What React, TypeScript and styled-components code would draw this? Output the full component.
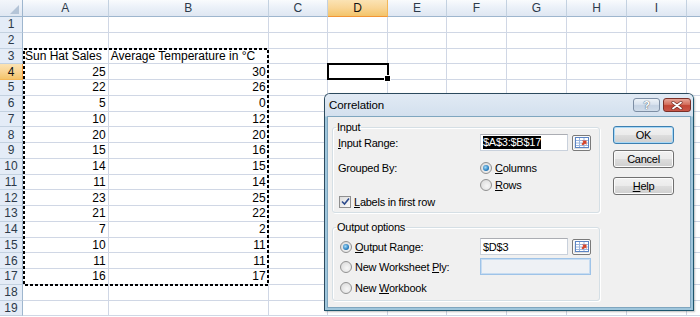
import React from 'react'
import styled, { createGlobalStyle } from 'styled-components'

const HEADER_H = 17
const ROW_H = 15.75
const ROW_HEAD_W = 23

// the last column is only a sliver at the window edge, so it has no visible letter
const COLUMNS = [
  { key: 'A', label: 'A', width: 85.7 },
  { key: 'B', label: 'B', width: 160 },
  { key: 'C', label: 'C', width: 59.3 },
  { key: 'D', label: 'D', width: 60 },
  { key: 'E', label: 'E', width: 59 },
  { key: 'F', label: 'F', width: 60 },
  { key: 'G', label: 'G', width: 60 },
  { key: 'H', label: 'H', width: 60 },
  { key: 'I', label: 'I', width: 60 },
  { key: 'J', label: '', width: 60 },
]

const GRID_COLS = `${ROW_HEAD_W}px ${COLUMNS.map((c) => `${c.width}px`).join(' ')}`

const SALES = [25, 22, 5, 10, 20, 15, 14, 11, 23, 21, 7, 10, 11, 16]
const TEMPS = [30, 26, 0, 12, 20, 16, 15, 14, 25, 22, 2, 11, 11, 17]

type CellData = { text: string; align: 'left' | 'right' }

function cellAt(row: number, col: string): CellData | null {
  if (row === 3 && col === 'A') return { text: 'Sun Hat Sales', align: 'left' }
  if (row === 3 && col === 'B') return { text: 'Average Temperature in °C', align: 'left' }
  if (row >= 4 && row <= 17) {
    if (col === 'A') return { text: String(SALES[row - 4]), align: 'right' }
    if (col === 'B') return { text: String(TEMPS[row - 4]), align: 'right' }
  }
  return null
}

const GlobalStyle = createGlobalStyle`
  html, body {
    margin: 0;
    padding: 0;
    background: #fff;
    overflow: hidden;
  }
  body {
    font-family: 'Liberation Sans', Arial, sans-serif;
  }
`

const Page = styled.div`
  position: relative;
  width: 700px;
  height: 317px;
  overflow: hidden;
  background: #fff;
`

/* ---------- spreadsheet ---------- */

const Sheet = styled.div`
  display: grid;
  grid-template-columns: ${GRID_COLS};
  grid-template-rows: ${HEADER_H}px repeat(19, ${ROW_H}px);
  font-size: 12px;
  color: #000;
`

const Corner = styled.div`
  box-sizing: border-box;
  display: flex;
  align-items: flex-end;
  justify-content: flex-end;
  padding: 0 3px 2px 0;
  border-right: 1px solid #9eb6ce;
  border-bottom: 1px solid #9eb6ce;
  background: linear-gradient(#f3f6fb, #dfe7f2);
`

const ColHeader = styled.div<{ $active?: boolean }>`
  box-sizing: border-box;
  display: flex;
  align-items: center;
  justify-content: center;
  border-right: 1px solid ${(p) => (p.$active ? '#f3b758' : '#c3d1e0')};
  border-bottom: 1px solid ${(p) => (p.$active ? '#f29536' : '#9eb6ce')};
  background: ${(p) =>
    p.$active
      ? 'linear-gradient(#fbe3b4, #f9d595 50%, #f3c46a)'
      : 'linear-gradient(#f9fbfd, #eaf0f8 50%, #dfe7f2)'};
  color: ${(p) => (p.$active ? '#111' : '#2c3a4a')};
  white-space: nowrap;
  overflow: hidden;
`

const RowHeader = styled.div<{ $active?: boolean }>`
  box-sizing: border-box;
  display: flex;
  align-items: center;
  justify-content: center;
  border-right: 1px solid ${(p) => (p.$active ? '#f29536' : '#9eb6ce')};
  border-bottom: 1px solid ${(p) => (p.$active ? '#f3b758' : '#c3d1e0')};
  background: ${(p) =>
    p.$active ? 'linear-gradient(#fbe3b4, #f9d595 50%, #f3c46a)' : '#e4ecf7'};
  color: ${(p) => (p.$active ? '#111' : '#2c3a4a')};
`

const Cell = styled.div<{ $align: 'left' | 'right' }>`
  box-sizing: border-box;
  display: flex;
  align-items: center;
  justify-content: ${(p) => (p.$align === 'right' ? 'flex-end' : 'flex-start')};
  padding: 0 2px;
  border-right: 1px solid #d0d7e5;
  border-bottom: 1px solid #d0d7e5;
  white-space: nowrap;
`

const Marquee = styled.svg`
  position: absolute;
  left: 23px;
  top: 47.5px;
  width: 246px;
  height: 238px;
  pointer-events: none;
`

const ActiveCell = styled.div`
  position: absolute;
  left: 327px;
  top: 62.5px;
  width: 62px;
  height: 17.5px;
  box-sizing: border-box;
  border: 2px solid #000;
`

const FillHandle = styled.div`
  position: absolute;
  right: -4px;
  bottom: -4px;
  width: 5px;
  height: 5px;
  background: #000;
  border: 1px solid #fff;
`

/* ---------- dialog ---------- */

const Dialog = styled.div`
  position: absolute;
  left: 324px;
  top: 93px;
  width: 370px;
  height: 218px;
  box-sizing: border-box;
  display: flex;
  flex-direction: column;
  padding: 0 2px 2px 2px;
  border: 1px solid #2c4a5e;
  border-bottom-color: #1d566d;
  border-right-color: #1d566d;
  border-radius: 6px 6px 0 0;
  background: linear-gradient(#e0e9f4, #cddcec 22px, #9fc6dc 23px, #9fc6dc);
  font-family: 'Liberation Sans', Arial, sans-serif;
  font-size: 11px;
  letter-spacing: -0.25px;
  color: #000;
  box-shadow: 1px 1px 2px rgba(0, 0, 0, 0.25);
`

const TitleBar = styled.div`
  height: 22px;
  display: flex;
  align-items: center;
  padding: 0 2px 0 4px;
  background: linear-gradient(#e1eaf4, #d3e0ee);
  margin: 0 -2px;
  border-radius: 5px 5px 0 0;
`

const Title = styled.div`
  flex: 1;
  font-size: 11.5px;
  letter-spacing: -0.1px;
`

const CaptionButton = styled.div<{ $kind: 'help' | 'close' }>`
  box-sizing: border-box;
  width: ${(p) => (p.$kind === 'close' ? 28 : 27)}px;
  height: 14px;
  margin-left: ${(p) => (p.$kind === 'close' ? 3 : 0)}px;
  display: flex;
  align-items: center;
  justify-content: center;
  border-radius: 3px;
  border: 1px solid ${(p) => (p.$kind === 'close' ? '#7a3028' : '#7d8ea4')};
  background: ${(p) =>
    p.$kind === 'close'
      ? 'linear-gradient(#e7a597, #d4705f 45%, #c24635 55%, #c9574a)'
      : 'linear-gradient(#eef3f8, #d8e2ee 45%, #c5d3e3 55%, #d0dcea)'};
  color: #fff;
  font-weight: bold;
  font-size: 11px;
  text-shadow: 0 0 1px #4d5d70, 0 0 1px #4d5d70;
`

const Body = styled.div`
  flex: 1;
  display: flex;
  padding: 4px 16px 0 4px;
  background: #f0f0f0;
  border: 1px solid #7fa6bf;
`

const Groups = styled.div`
  width: 268px;
  display: flex;
  flex-direction: column;
`

const Group = styled.fieldset<{ $gap?: number }>`
  margin: ${(p) => p.$gap ?? 0}px 0 0 0;
  padding: 0 0 ${(p) => (p.$gap ? 4 : 2)}px 3px;
  border: 1px solid #d5dfe5;
  border-radius: 3px;
  box-shadow: inset 1px 1px 0 #fff, 1px 1px 0 #fff;
  min-width: 0;
`

const Legend = styled.legend`
  padding: 0 1px;
  line-height: 13px;
`

const Row = styled.div<{ $top?: number; $indent?: number }>`
  display: flex;
  align-items: center;
  height: 17px;
  margin-top: ${(p) => p.$top ?? 0}px;
  padding-left: ${(p) => p.$indent ?? 2}px;
`

const Label = styled.div<{ $width?: number }>`
  width: ${(p) => p.$width ?? 142}px;
  display: flex;
  align-items: center;
  flex-shrink: 0;
  white-space: nowrap;
`

const TextBox = styled.div<{ $width?: number; $disabled?: boolean }>`
  box-sizing: border-box;
  width: ${(p) => p.$width ?? 88}px;
  height: 17px;
  display: flex;
  align-items: center;
  padding-left: 2px;
  border: 1px solid ${(p) => (p.$disabled ? '#9ec3e8' : '#c9d1dc')};
  border-top-color: ${(p) => (p.$disabled ? '#9ec3e8' : '#abadb3')};
  background: ${(p) => (p.$disabled ? '#eef1f5' : '#fff')};
  box-shadow: ${(p) => (p.$disabled ? 'inset 0 0 0 1px #c7dcf1' : 'none')};
`

const Selected = styled.span`
  background: #000;
  color: #fff;
  line-height: 13px;
`

const RefButton = styled.div`
  box-sizing: border-box;
  width: 19px;
  height: 16px;
  margin-left: 4px;
  display: flex;
  align-items: center;
  justify-content: center;
  border: 1px solid #7a7a7a;
  border-radius: 2px;
  background: linear-gradient(#f4f4f4, #dcdcdc);
  box-shadow: inset 0 0 0 1px #fbfbfb;
`

const Radio = styled.span<{ $checked?: boolean }>`
  box-sizing: border-box;
  width: 12px;
  height: 12px;
  margin-right: 3px;
  border-radius: 50%;
  border: 1px solid #929292;
  background: radial-gradient(circle at 60% 60%, #f7f7f7, #d6d6d6);
  display: inline-flex;
  align-items: center;
  justify-content: center;
  flex-shrink: 0;

  &::after {
    content: '';
    display: ${(p) => (p.$checked ? 'block' : 'none')};
    width: 6px;
    height: 6px;
    border-radius: 50%;
    background: radial-gradient(circle at 40% 40%, #a6dcf8, #2a7fc0 60%, #16548c);
  }
`

const CheckBox = styled.span`
  box-sizing: border-box;
  width: 12px;
  height: 12px;
  margin: 0 3px 0 1px;
  border: 1px solid #8f8f8f;
  background: linear-gradient(135deg, #dcdcdc, #fbfbfb);
  display: inline-flex;
  align-items: center;
  justify-content: center;
  flex-shrink: 0;
`

const Buttons = styled.div`
  margin-left: 13px;
  display: flex;
  flex-direction: column;
  padding-top: 5px;
`

const PushButton = styled.div<{ $default?: boolean; $top: number }>`
  box-sizing: border-box;
  width: 61px;
  height: 18px;
  margin-top: ${(p) => p.$top}px;
  display: flex;
  align-items: center;
  justify-content: center;
  border-radius: 3px;
  border: 1px solid ${(p) => (p.$default ? '#3c7fb1' : '#707070')};
  background: linear-gradient(#f2f2f2, #ebebeb 48%, #dddddd 52%, #cfcfcf);
  box-shadow: inset 0 0 0 1px ${(p) => (p.$default ? '#a8d8f6' : '#fcfcfc')};
`

function RefIcon() {
  return (
    <svg width="14" height="11" viewBox="0 0 14 11">
      <rect x="0.5" y="0.5" width="13" height="10" fill="#fff" stroke="#5b84c4" />
      <path d="M1 3.5H13M1 6H13M1 8.5H13M4.5 1V10M9 1V10" stroke="#9db6de" strokeWidth="1" />
      <path d="M7 3.5L11.5 3.5L11.5 8L10 6.6L8 8.6L6.4 7L8.4 5Z" fill="#d5442a" />
    </svg>
  )
}

function CloseGlyph() {
  return (
    <svg width="12" height="9" viewBox="0 0 12 9">
      <path d="M2 1.5L10 7.5M10 1.5L2 7.5" stroke="#6b2a22" strokeWidth="3" strokeLinecap="round" />
      <path d="M2 1.5L10 7.5M10 1.5L2 7.5" stroke="#fff" strokeWidth="1.8" strokeLinecap="round" />
    </svg>
  )
}

function CheckMark() {
  return (
    <svg width="9" height="9" viewBox="0 0 9 9">
      <path d="M1 4.5L3.5 7L8 1.5" fill="none" stroke="#2c4a8c" strokeWidth="1.6" />
    </svg>
  )
}

function CornerMark() {
  return (
    <svg width="9" height="9" viewBox="0 0 9 9">
      <path d="M9 0V9H0Z" fill="#b4c4d7" />
    </svg>
  )
}

function CorrelationDialog() {
  return (
    <Dialog>
      <TitleBar>
        <Title>Correlation</Title>
        <CaptionButton $kind="help">?</CaptionButton>
        <CaptionButton $kind="close">
          <CloseGlyph />
        </CaptionButton>
      </TitleBar>
      <Body>
        <Groups>
          <Group>
            <Legend>Input</Legend>
            <Row>
              <Label>
                <span>
                  <u>I</u>nput Range:
                </span>
              </Label>
              <TextBox>
                <Selected>$A$3:$B$17</Selected>
              </TextBox>
              <RefButton>
                <RefIcon />
              </RefButton>
            </Row>
            <Row $top={8}>
              <Label>Grouped By:</Label>
              <Radio $checked />
              <span>
                <u>C</u>olumns
              </span>
            </Row>
            <Row>
              <Label />
              <Radio />
              <span>
                <u>R</u>ows
              </span>
            </Row>
            <Row>
              <CheckBox>
                <CheckMark />
              </CheckBox>
              <span>
                <u>L</u>abels in first row
              </span>
            </Row>
          </Group>
          <Group $gap={8}>
            <Legend>Output options</Legend>
            <Row $top={4} $indent={4}>
              <Label $width={140}>
                <Radio $checked />
                <span>
                  <u>O</u>utput Range:
                </span>
              </Label>
              <TextBox>$D$3</TextBox>
              <RefButton>
                <RefIcon />
              </RefButton>
            </Row>
            <Row $top={3} $indent={4}>
              <Label $width={140}>
                <Radio />
                <span>
                  New Worksheet <u>P</u>ly:
                </span>
              </Label>
              <TextBox $width={111} $disabled />
            </Row>
            <Row $top={4} $indent={4}>
              <Label $width={140}>
                <Radio />
                <span>
                  New <u>W</u>orkbook
                </span>
              </Label>
            </Row>
          </Group>
        </Groups>
        <Buttons>
          <PushButton $default $top={0}>
            OK
          </PushButton>
          <PushButton $top={6}>Cancel</PushButton>
          <PushButton $top={9}>
            <span>
              <u>H</u>elp
            </span>
          </PushButton>
        </Buttons>
      </Body>
    </Dialog>
  )
}

export default function App() {
  const rows = Array.from({ length: 19 }, (_, i) => i + 1)

  return (
    <Page>
      <GlobalStyle />
      <Sheet>
        <Corner>
          <CornerMark />
        </Corner>
        {COLUMNS.map((c) => (
          <ColHeader key={c.key} $active={c.key === 'D'}>
            {c.label}
          </ColHeader>
        ))}
        {rows.map((r) => (
          <React.Fragment key={r}>
            <RowHeader $active={r === 4}>{r}</RowHeader>
            {COLUMNS.map((c) => {
              const data = cellAt(r, c.key)
              return (
                <Cell key={c.key} $align={data?.align ?? 'left'}>
                  {data?.text}
                </Cell>
              )
            })}
          </React.Fragment>
        ))}
      </Sheet>
      <Marquee viewBox="0 0 246 238">
        <rect
          x="1"
          y="1"
          width="244"
          height="236"
          fill="none"
          stroke="#000"
          strokeWidth="2"
          strokeDasharray="3 2"
        />
      </Marquee>
      <ActiveCell>
        <FillHandle />
      </ActiveCell>
      <CorrelationDialog />
    </Page>
  )
}
